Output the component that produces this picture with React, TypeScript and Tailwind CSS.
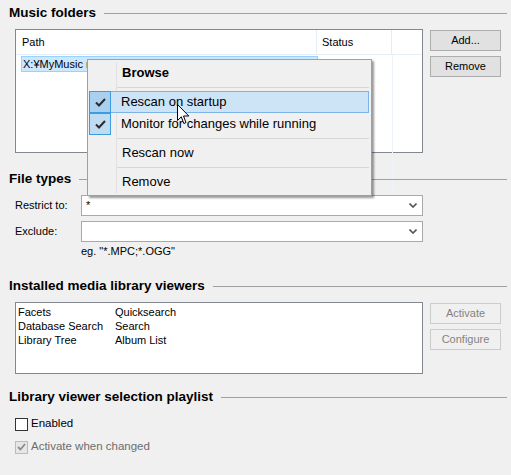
import React from "react";

const ui = { fontFamily: '"Liberation Sans", Arial, sans-serif' };

const SectionHeader = ({ title }: { title: string }) => (
  <div className="flex items-center h-[16px] pl-[9px] pr-[4px]">
    <span className="text-[13.5px] font-bold text-black leading-none">{title}</span>
    <div className="flex-1 h-px bg-[#a0a0a0] ml-[8px]" />
  </div>
);

const Button = ({ label, disabled }: { label: string; disabled?: boolean }) => (
  <div
    className={
      disabled
        ? "w-[71px] h-[21px] flex items-center justify-center border border-[#cccccc] bg-[#f0f0f0] text-[11px] text-[#838383]"
        : "w-[71px] h-[21px] flex items-center justify-center border border-[#adadad] bg-[#e1e1e1] text-[11px] text-black"
    }
  >
    {label}
  </div>
);

const Combo = ({ value }: { value: string }) => (
  <div className="w-[342px] h-[21px] border border-[#a9a9a9] bg-white flex items-center px-[4px]">
    <span className="flex-1 text-[11px] text-black">{value}</span>
    <svg width="8" height="5" viewBox="0 0 8 5" className="mr-[1px]">
      <polyline points="0.5,0.5 4,4 7.5,0.5" fill="none" stroke="#555" strokeWidth="1.6" />
    </svg>
  </div>
);

const Check = () => (
  <svg width="11" height="9" viewBox="0 0 11 9">
    <path d="M1 4.5 L4 7.5 L10 1" fill="none" stroke="#2b2b2b" strokeWidth="2" />
  </svg>
);

const Separator = () => (
  <div className="h-px bg-[#d7d7d7] ml-[28px] my-[3px]" />
);

export default function App() {
  return (
    <div className="relative w-[511px] h-[475px] bg-[#f0f0f0] overflow-hidden pt-[5px]" style={ui}>
      <SectionHeader title="Music folders" />

      <div className="flex mt-[8px] pl-[15px] gap-[7px]">
        <div className="w-[408px] h-[124px] border border-[#828790] bg-white">
          <div className="flex h-[25px] border-b border-[#e5eef7] text-[11px] text-black">
            <div className="w-[301px] border-r border-[#e5eef7] flex items-center pl-[6px] pt-px">Path</div>
            <div className="w-[75px] border-r border-[#e5eef7] flex items-center pl-[5px] pt-px">Status</div>
          </div>
          <div className="flex h-[152px]">
            <div className="w-[302px] pl-[5px] pt-px">
              <div className="h-[16px] border border-[#99d1ff] bg-[#cce8ff] flex items-center pl-px text-[11px] text-black whitespace-nowrap overflow-hidden">
                X:¥MyMusic m
              </div>
            </div>
            <div className="w-[75px] border-r border-[#eef3f9]" />
          </div>
        </div>
        <div className="flex flex-col gap-[5px] pt-px">
          <Button label="Add..." />
          <Button label="Remove" />
        </div>
      </div>

      <div className="mt-[18px]">
        <SectionHeader title="File types" />
      </div>

      <div className="mt-[8px] pl-[15px] flex flex-col gap-[5px]">
        <div className="flex items-center">
          <span className="w-[66px] text-[11px] text-black">Restrict to:</span>
          <Combo value="*" />
        </div>
        <div className="flex items-center">
          <span className="w-[66px] text-[11px] text-black">Exclude:</span>
          <Combo value="" />
        </div>
      </div>
      <div className="mt-[2px] pl-[81px] h-[14px] text-[11px] text-black leading-[14px]">eg. "*.MPC;*.OGG"</div>

      <div className="mt-[20px]">
        <SectionHeader title="Installed media library viewers" />
      </div>

      <div className="flex mt-[8px] pl-[15px] gap-[7px]">
        <div className="w-[408px] h-[72px] border border-[#828790] bg-white pt-[2px] pl-[2px]">
          <div className="grid grid-cols-[97px_1fr] text-[11px] text-black leading-[14px]">
            <span>Facets</span>
            <span>Quicksearch</span>
            <span>Database Search</span>
            <span>Search</span>
            <span>Library Tree</span>
            <span>Album List</span>
          </div>
        </div>
        <div className="flex flex-col gap-[5px] pt-px">
          <Button label="Activate" disabled />
          <Button label="Configure" disabled />
        </div>
      </div>

      <div className="mt-[15px]">
        <SectionHeader title="Library viewer selection playlist" />
      </div>

      <div className="mt-[11px] pl-[15px] flex flex-col gap-[7px]">
        <div className="flex items-center h-[16px]">
          <div className="w-[13px] h-[13px] border border-[#333333] bg-white" />
          <span className="ml-[3px] text-[11.5px] text-black">Enabled</span>
        </div>
        <div className="flex items-center h-[16px]">
          <div className="w-[13px] h-[13px] border border-[#bcbcbc] bg-[#e6e6e6] flex items-center justify-center">
            <svg width="9" height="8" viewBox="0 0 9 8">
              <path d="M1 4 L3.5 6.5 L8 1" fill="none" stroke="#8a8a8a" strokeWidth="1.8" />
            </svg>
          </div>
          <span className="ml-[3px] text-[11.5px] text-[#6d6d6d]">Activate when changed</span>
        </div>
      </div>

      {/* context menu */}
      <div className="absolute left-[87px] top-[59px] w-[285px] h-[137px] border border-[#a0a0a0] bg-[#f0f0f0] shadow-[2px_2px_2px_rgba(0,0,0,0.4)] pt-[2px] pl-px pr-[2px] text-[13px] text-black">
        <div className="absolute left-[28px] top-[2px] bottom-[2px] w-px bg-[#e2e2e2]" />
        <div className="relative h-[22px] flex items-center pl-[33px] font-bold">Browse</div>
        <Separator />
        <div className="relative h-[22px] flex items-center border border-[#7db4e8] bg-[#cde4f7]">
          <div className="absolute -left-px -top-px w-[22px] h-[22px] border border-[#3d9be0] bg-[#a9d0ef] flex items-center justify-center">
            <Check />
          </div>
          <span className="pl-[31px]">Rescan on startup</span>
        </div>
        <div className="relative h-[22px] flex items-center">
          <div className="absolute left-0 top-0 w-[22px] h-[22px] border border-[#3d9be0] bg-[#bfdcf3] flex items-center justify-center">
            <Check />
          </div>
          <span className="pl-[32px]">Monitor for changes while running</span>
        </div>
        <Separator />
        <div className="relative h-[22px] flex items-center pl-[33px]">Rescan now</div>
        <Separator />
        <div className="relative h-[22px] flex items-center pl-[33px]">Remove</div>
      </div>

      {/* mouse pointer */}
      <svg className="absolute left-[177px] top-[104px]" width="13" height="21" viewBox="0 0 13 21">
        <path d="M0.5 0.5 L0.5 16.5 L4.3 12.8 L6.8 19.5 L9 18.6 L6.5 12 L11.8 12 Z" fill="#ffffff" stroke="#000000" strokeWidth="1" strokeLinejoin="miter" />
      </svg>
    </div>
  );
}
